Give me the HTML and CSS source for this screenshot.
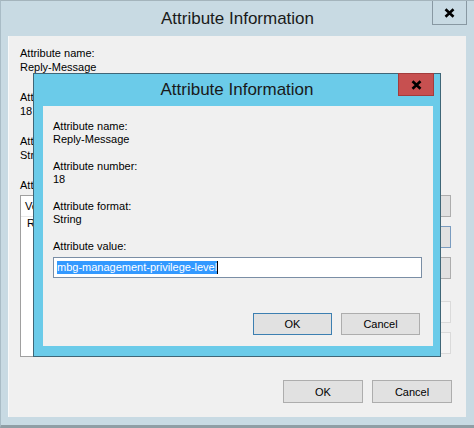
FILE: index.html
```html
<!DOCTYPE html>
<html>
<head>
<meta charset="utf-8">
<link rel="stylesheet" href="styles.css">
</head>
<body>
<div class="window">
  <div class="titlebar">
    <span></span>
    <span class="title">Attribute Information</span>
    <button class="close"><svg width="11" height="10" viewBox="0 0 11 10"><path d="M1.5 1.2 L9.5 8.8 M9.5 1.2 L1.5 8.8" stroke="#000" stroke-width="2.6" fill="none"/></svg></button>
  </div>
  <div class="client">
    <div class="group"><div>Attribute name:</div><div>Reply-Message</div></div>
    <div class="group"><div>Attribute number:</div><div>18</div></div>
    <div class="group"><div>Attribute format:</div><div>String</div></div>
    <div class="list-label">Attribute values:</div>
    <div class="list-row">
      <div class="listbox">
        <div class="list-head"><span class="col">Vendor</span><span class="col">Value</span></div>
        <div class="list-item">RADIUS Standard</div>
      </div>
      <div class="side-buttons">
        <button class="btn">Add...</button>
        <button class="btn focus">Remove</button>
        <button class="btn">Edit...</button>
        <button class="btn disabled gap">Move Up</button>
        <button class="btn disabled">Move Down</button>
      </div>
    </div>
    <div class="footer">
      <button class="btn">OK</button>
      <button class="btn">Cancel</button>
    </div>
  </div>

  <div class="dialog">
    <div class="d-titlebar">
      <span></span>
      <span class="d-title">Attribute Information</span>
      <button class="d-close"><svg width="11" height="10" viewBox="0 0 11 10"><path d="M1.5 1.2 L9.5 8.8 M9.5 1.2 L1.5 8.8" stroke="#000" stroke-width="2.6" fill="none"/></svg></button>
    </div>
    <div class="d-client">
      <div class="d-group"><div>Attribute name:</div><div>Reply-Message</div></div>
      <div class="d-group"><div>Attribute number:</div><div>18</div></div>
      <div class="d-group"><div>Attribute format:</div><div>String</div></div>
      <div class="d-label">Attribute value:</div>
      <div class="input"><span class="sel">mbg-management-privilege-level</span><span class="caret"></span></div>
      <div class="d-footer">
        <button class="btn default">OK</button>
        <button class="btn">Cancel</button>
      </div>
    </div>
  </div>
</div>
</body>
</html>
```

FILE: styles.css
```css
* { box-sizing: border-box; }
html, body { margin: 0; padding: 0; }
body {
  width: 474px;
  height: 428px;
  overflow: hidden;
  font-family: "Liberation Sans", Arial, sans-serif;
  font-size: 11px;
  color: #000;
  background: #c8dae3;
}
.window {
  position: relative;
  width: 474px;
  height: 428px;
  background: #c8dae3;
  border-top: 1px solid #a4b4bc;
  border-left: 1px solid #a9bcc6;
  border-bottom: 3px solid #8f9ea5;
  display: flex;
  flex-direction: column;
}
.titlebar {
  height: 35px;
  display: grid;
  grid-template-columns: 1fr auto 1fr;
  align-items: start;
  flex: none;
}
.title {
  font-size: 17px;
  line-height: 33px;
  margin-top: 1px;
  color: #1a1a1a;
}
.close {
  justify-self: end;
  margin-right: 7px;
  width: 35px;
  height: 24px;
  background: #c8dae3;
  border: 1px solid #8898a2;
  border-top: none;
  padding: 0;
  display: flex;
  align-items: center;
  justify-content: center;
}
.client {
  flex: 1;
  margin: 0 8px 8px 7px;
  background: #f0f0f0;
  border-left: 1px solid #f7f9fa;
  padding: 10px 14px 14px 11px;
  display: flex;
  flex-direction: column;
  line-height: 14px;
}
.group { margin-bottom: 16px; }
.list-label { }
.list-row {
  margin-top: 3px;
  display: flex;
  gap: 9px;
  height: 162px;
}
.listbox {
  width: 343px;
  background: #fff;
  border: 1px solid #a0a0a0;
  line-height: 13px;
}
.list-head {
  display: flex;
  padding: 4px 0 3px 0;
  border-bottom: 1px solid #e8e8e8;
}
.list-head .col { padding-left: 4px; width: 150px; border-right: 1px solid #e5e5e5; }
.list-item { padding-left: 6px; }
.side-buttons {
  width: 79px;
  display: flex;
  flex-direction: column;
  gap: 9px;
}
.side-buttons .gap { margin-top: 13px; }
.btn {
  font-family: "Liberation Sans", Arial, sans-serif;
  font-size: 11px;
  color: #000;
  height: 22px;
  width: 79px;
  background: #e1e1e1;
  border: 1px solid #adadad;
  padding: 0;
  flex: none;
}
.btn.focus { border-color: #7a9cc0; }
.btn.default { border-color: #3c7fb1; }
.btn.disabled { background: #f4f4f4; border-color: #dadada; color: #a0a0a0; }
.footer {
  margin-top: auto;
  display: flex;
  justify-content: flex-end;
  gap: 9px;
}
.footer .btn { width: 80px; height: 23px; }

/* overlapping child dialog */
.dialog {
  position: absolute;
  left: 32px;
  top: 72px;
  width: 408px;
  height: 284px;
  background: #6bcbe9;
  border: 1px solid #3f6677;
  display: flex;
  flex-direction: column;
}
.d-titlebar {
  height: 32px;
  flex: none;
  display: grid;
  grid-template-columns: 1fr auto 1fr;
  align-items: start;
}
.d-title {
  font-size: 17px;
  line-height: 32px;
  color: #1a1a1a;
}
.d-close {
  justify-self: end;
  margin-top: -1px;
  margin-right: 6px;
  width: 36px;
  height: 23px;
  background: #c75050;
  border: 1px solid #a33c3c;
  padding: 0;
  display: flex;
  align-items: center;
  justify-content: center;
}
.d-client {
  height: 240px;
  margin: 0 7px 10px 9px;
  background: #f0f0f0;
  padding: 14px 11px 11px 10px;
  display: flex;
  flex-direction: column;
  line-height: 13px;
}
.d-group { margin-bottom: 14px; }
.input {
  margin-top: 4px;
  height: 21px;
  background: #fff;
  border: 1px solid #7a8ea5;
  padding: 3px 0 0 3px;
  display: flex;
  align-items: flex-start;
}
.sel {
  background: #3399ff;
  color: #fff;
  line-height: 13px;
  white-space: nowrap;
}
.caret {
  width: 1px;
  height: 13px;
  background: #000;
}
.d-footer {
  margin-top: auto;
  margin-right: 2px;
  display: flex;
  justify-content: flex-end;
  gap: 9px;
}
```
